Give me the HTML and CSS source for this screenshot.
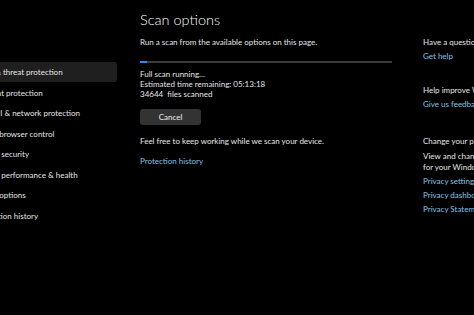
FILE: index.html
```html
<!DOCTYPE html>
<html lang="en">
<head>
    <meta charset="UTF-8">
    <title>Scan options</title>
    <link rel="stylesheet" href="styles.css">
</head>
<body>

<div class="page">
    <div class="nav">
        <div class="nav-item selected"><span class="nav-label">Virus &amp; threat protection</span></div>
        <div class="nav-item"><span class="nav-label">Account protection</span></div>
        <div class="nav-item"><span class="nav-label">Firewall &amp; network protection</span></div>
        <div class="nav-item"><span class="nav-label">App &amp; browser control</span></div>
        <div class="nav-item"><span class="nav-label">Device security</span></div>
        <div class="nav-item"><span class="nav-label">Device performance &amp; health</span></div>
        <div class="nav-item"><span class="nav-label">Family options</span></div>
        <div class="nav-item"><span class="nav-label">Protection history</span></div>
    </div>

    <div class="main">
        <h1>Scan options</h1>
        <p class="intro">Run a scan from the available options on this page.</p>
        <div class="progress"><div class="progress-fill"></div></div>
        <div class="status">
            <div>Full scan running...</div>
            <div>Estimated time remaining: 05:13:18</div>
            <div>34644&nbsp; files scanned</div>
        </div>
        <button class="cancel-button">Cancel</button>
        <p class="note">Feel free to keep working while we scan your device.</p>
        <a class="link" href="#">Protection history</a>
    </div>

    <div class="side">
        <div class="side-group">
            <div class="side-title">Have a question?</div>
            <a class="link" href="#">Get help</a>
        </div>
        <div class="side-group">
            <div class="side-title">Help improve Windows Security</div>
            <a class="link" href="#">Give us feedback</a>
        </div>
        <div class="side-group privacy">
            <div class="side-title">Change your privacy settings</div>
            <div class="side-text">View and change privacy settings<br>for your Windows 10 device.</div>
            <a class="link" href="#">Privacy settings</a>
            <a class="link" href="#">Privacy dashboard</a>
            <a class="link" href="#">Privacy Statement</a>
        </div>
    </div>
</div>

</body>
</html>
```

FILE: styles.css
```css
body {
    font-family: Lato, "Open Sans", sans-serif;
    background-color: #000;
    color: #e6e6e6;
    margin: 0;
    padding: 0;
    overflow: hidden;
}
.page {
    display: flex;
    width: 474px;
    height: 315px;
    overflow: hidden;
}
.nav {
    width: 117px;
    flex-shrink: 0;
    padding-top: 62px;
    overflow: hidden;
}
.nav-item {
    height: 20px;
    line-height: 20px;
    font-size: 8px;
    white-space: nowrap;
    overflow: hidden;
    border-radius: 0 3px 3px 0;
    margin-bottom: 0.5px;
}
.nav-item.selected {
    background-color: #1f1f1f;
}
.nav-label {
    display: inline-block;
    margin-left: -25px;
}
.main {
    width: 252px;
    flex-shrink: 0;
    margin-left: 23px;
    font-size: 8px;
}
h1 {
    font-size: 14.5px;
    font-weight: 300;
    margin: 9px 0 0 0;
    line-height: 22px;
    color: #fff;
}
.intro {
    margin: 5px 0 0 0;
    line-height: 12px;
}
.progress {
    height: 2px;
    background-color: #3c3c3c;
    margin-top: 13px;
}
.progress-fill {
    width: 7px;
    height: 2px;
    background-color: #2f8be0;
}
.status {
    margin-top: 6px;
    line-height: 10px;
}
.cancel-button {
    display: block;
    width: 61px;
    height: 16px;
    margin-top: 10px;
    background-color: #333;
    color: #eee;
    border: none;
    border-radius: 3px;
    font-family: Lato, "Open Sans", sans-serif;
    font-size: 8px;
    padding: 0;
}
.note {
    margin: 10px 0 0 0;
    line-height: 12px;
}
.link {
    display: block;
    color: #86c3e4;
    text-decoration: none;
    margin-top: 8px;
    line-height: 12px;
}
.side {
    margin-left: 31px;
    padding-top: 36px;
    font-size: 8px;
    white-space: nowrap;
}
.side-group {
    margin-bottom: 22px;
}
.side-group.privacy {
    padding-top: 3px;
}
.side-title {
    line-height: 12px;
}
.side-text {
    margin-top: 4px;
    line-height: 11px;
}
.side .link {
    margin-top: 2px;
}
.side-text + .link {
    margin-top: 2px;
}
```
